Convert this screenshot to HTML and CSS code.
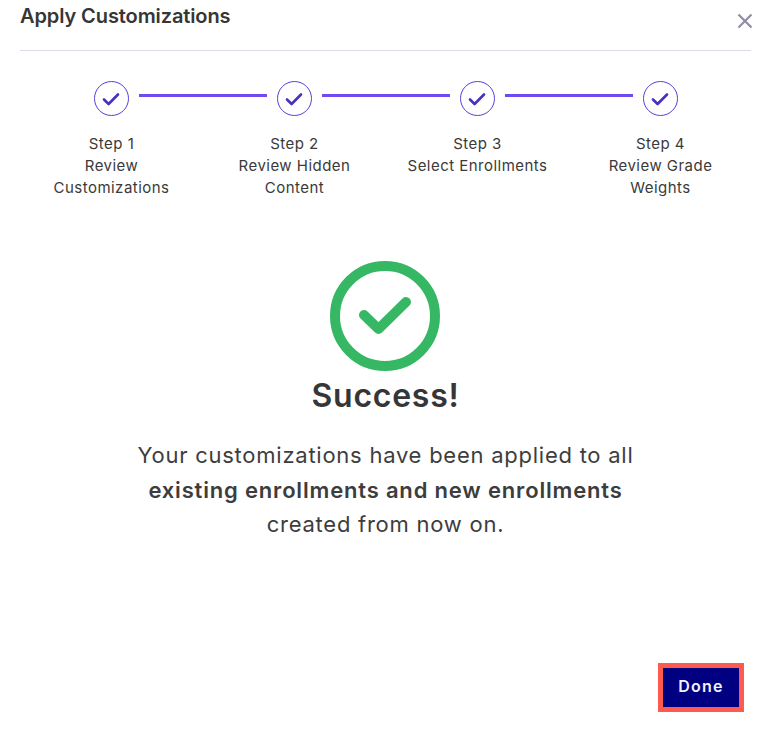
FILE: index.html
```html
<!DOCTYPE html>
<html lang="en">
<head>
<meta charset="utf-8">
<title>Apply Customizations</title>
<link rel="stylesheet" href="styles.css">
</head>
<body>
<main class="modal">
  <header class="modal-header">
    <h1 class="modal-title">Apply Customizations</h1>
    <button class="close" aria-label="Close">
      <svg viewBox="0 0 16 16" width="16" height="16"><path d="M1.500 1.500 14.500 14.500M14.500 1.500 1.500 14.500" fill="none" stroke="#8e8ca6" stroke-width="2.2"/></svg>
    </button>
  </header>
  <section class="stepper">
    <div class="track">
      <span class="dot"><svg viewBox="0 0 18 14" width="18" height="14"><path d="M2 7.500 6.600 12 16 2.500" fill="none" stroke="#4a2fc0" stroke-width="2.6" stroke-linecap="round" stroke-linejoin="round"/></svg></span>
      <span class="line"></span>
      <span class="dot"><svg viewBox="0 0 18 14" width="18" height="14"><path d="M2 7.500 6.600 12 16 2.500" fill="none" stroke="#4a2fc0" stroke-width="2.6" stroke-linecap="round" stroke-linejoin="round"/></svg></span>
      <span class="line"></span>
      <span class="dot"><svg viewBox="0 0 18 14" width="18" height="14"><path d="M2 7.500 6.600 12 16 2.500" fill="none" stroke="#4a2fc0" stroke-width="2.6" stroke-linecap="round" stroke-linejoin="round"/></svg></span>
      <span class="line"></span>
      <span class="dot"><svg viewBox="0 0 18 14" width="18" height="14"><path d="M2 7.500 6.600 12 16 2.500" fill="none" stroke="#4a2fc0" stroke-width="2.6" stroke-linecap="round" stroke-linejoin="round"/></svg></span>
    </div>
    <ol class="labels">
      <li>Step 1<br>Review<br>Customizations</li>
      <li>Step 2<br>Review Hidden<br>Content</li>
      <li>Step 3<br>Select Enrollments</li>
      <li>Step 4<br>Review Grade<br>Weights</li>
    </ol>
  </section>
  <section class="result">
    <svg class="result-icon" viewBox="0 0 110 110" width="110" height="110">
      <circle cx="55" cy="55" r="50" fill="none" stroke="#36b764" stroke-width="10"/>
      <path d="M34 54 48.500 68 76 41" fill="none" stroke="#36b764" stroke-width="10" stroke-linecap="round" stroke-linejoin="round"/>
    </svg>
    <h2 class="result-title">Success!</h2>
    <p class="result-text">Your customizations have been applied to all<br><strong>existing enrollments and new enrollments</strong><br>created from now on.</p>
  </section>
  <footer class="modal-footer">
    <button class="done">Done</button>
  </footer>
</main>
</body>
</html>
```
FILE: styles.css
```css
* { box-sizing: border-box; }
html, body { margin: 0; height: 100%; background: #fff; }
body { font-family: Inter, "Liberation Sans", sans-serif; color: #363636; }
.modal { width: 770px; height: 735px; padding: 0 19px 0 20px; display: flex; flex-direction: column; }
.modal-header { height: 51px; border-bottom: 1px solid #dcdbe6; display: flex; justify-content: space-between; align-items: flex-start; }
.modal-title { margin: 5px 0 0; font-size: 20px; line-height: 22px; font-weight: 600; letter-spacing: -0.1px; color: #363636; }
.close { margin: 13px -2px 0 0; padding: 0; border: 0; background: none; width: 16px; height: 16px; display: block; }
.close svg { display: block; }
.stepper { margin-top: 30px; }
.track { display: flex; align-items: flex-start; padding-left: 73.6px; }
.dot { flex: none; width: 35px; height: 35px; border: 1.5px solid #5a3fd8; border-radius: 50%; display: flex; align-items: center; justify-content: center; }
.dot svg { display: block; }
.line { flex: none; width: 128px; height: 3px; margin: 13px 10px 0; background: #7049f0; }
.labels { list-style: none; margin: 17px 0 0; padding: 0; display: grid; grid-template-columns: repeat(4, 183px); font-size: 15px; line-height: 22px; letter-spacing: 0.47px; text-align: center; color: #3a3a3a; }
.result { margin-top: 62px; display: flex; flex-direction: column; align-items: center; }
.result-icon { display: block; margin-right: 2px; }
.result-title { margin: 5px 0 0; font-size: 32px; line-height: 40px; font-weight: 600; letter-spacing: 0.75px; color: #363636; }
.result-text { margin: 22px 0 0; font-size: 22px; line-height: 34.5px; letter-spacing: 0.75px; text-align: center; color: #3d3d3d; }
.result-text strong { font-weight: 600; letter-spacing: 0.82px; }
.modal-footer { margin-top: auto; padding: 0 7px 23px 0; display: flex; justify-content: flex-end; }
.done { width: 86px; height: 49px; background: #000080; border: 5px solid #ff5a4f; color: #f2f2fa; font: 600 16px Inter, "Liberation Sans", sans-serif; letter-spacing: 1.3px; padding: 0 0 3px; }
```
